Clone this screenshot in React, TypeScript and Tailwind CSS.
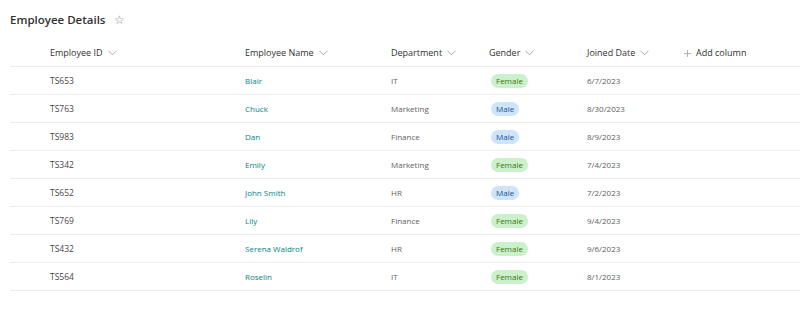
import { FC } from "react";

type Employee = {
  id: string;
  name: string;
  dept: string;
  gender: "Female" | "Male";
  joined: string;
};

const employees: Employee[] = [
  { id: "TS653", name: "Blair", dept: "IT", gender: "Female", joined: "6/7/2023" },
  { id: "TS763", name: "Chuck", dept: "Marketing", gender: "Male", joined: "8/30/2023" },
  { id: "TS983", name: "Dan", dept: "Finance", gender: "Male", joined: "8/9/2023" },
  { id: "TS342", name: "Emily", dept: "Marketing", gender: "Female", joined: "7/4/2023" },
  { id: "TS652", name: "John Smith", dept: "HR", gender: "Male", joined: "7/2/2023" },
  { id: "TS769", name: "Lily", dept: "Finance", gender: "Female", joined: "9/4/2023" },
  { id: "TS432", name: "Serena Waldrof", dept: "HR", gender: "Female", joined: "9/6/2023" },
  { id: "TS564", name: "Roselin", dept: "IT", gender: "Female", joined: "8/1/2023" },
];

const Chevron: FC = () => (
  <svg width="9" height="6" viewBox="0 0 9 6" className="ml-[5px] text-[#a19f9d]">
    <path d="M0.5 0.8 L4.5 4.8 L8.5 0.8" fill="none" stroke="currentColor" strokeWidth="0.9" />
  </svg>
);

const HeaderCell: FC<{ label: string; width: string }> = ({ label, width }) => (
  <div className={`flex items-center ${width}`}>
    <span>{label}</span>
    <Chevron />
  </div>
);

const App: FC = () => {
  return (
    <div
      className="w-[800px] h-[318px] bg-white text-[#323130] overflow-hidden"
      style={{ fontFamily: '"Open Sans", "Noto Sans", sans-serif' }}
    >
      {/* title */}
      <div className="flex items-center pl-[10px] pt-[9px] h-[31px]">
        <h1 className="text-[11.5px] font-semibold">Employee Details</h1>
        <span className="ml-[9px] text-[12px] text-[#8a8886] leading-none">☆</span>
      </div>

      {/* list */}
      <div className="ml-[10px] mt-[9px]">
        <div className="flex items-center h-[27px] pl-[40px] text-[9px] border-b border-[#edebe9]">
          <HeaderCell label="Employee ID" width="w-[195px]" />
          <HeaderCell label="Employee Name" width="w-[146px]" />
          <HeaderCell label="Department" width="w-[98px]" />
          <HeaderCell label="Gender" width="w-[98px]" />
          <HeaderCell label="Joined Date" width="w-[97px]" />
          <div className="flex items-center">
            <svg width="7" height="7" viewBox="0 0 7 7" className="mr-[5px] text-[#a19f9d]">
              <path d="M3.5 0 V7 M0 3.5 H7" stroke="currentColor" strokeWidth="0.8" />
            </svg>
            <span>Add column</span>
          </div>
        </div>

        {employees.map((e) => (
          <div
            key={e.id}
            className="flex items-center h-[28px] pl-[40px] text-[8px] leading-[12px] text-[#605e5c] border-b border-[#edebe9]"
          >
            <div className="w-[195px] text-[8.5px] text-[#484644]">{e.id}</div>
            <div className="w-[146px] text-[#038387]">{e.name}</div>
            <div className="w-[98px]">{e.dept}</div>
            <div className="w-[98px] pl-[2px] flex">
              {e.gender === "Female" ? (
                <span className="inline-flex items-center h-[14px] px-[5px] rounded-full bg-[#caf0cc] text-[#437406]">
                  Female
                </span>
              ) : (
                <span className="inline-flex items-center h-[14px] px-[5px] rounded-full bg-[#cfe4fa] text-[#0f548c]">
                  Male
                </span>
              )}
            </div>
            <div className="w-[97px]">{e.joined}</div>
          </div>
        ))}
      </div>
    </div>
  );
};

export default App;
